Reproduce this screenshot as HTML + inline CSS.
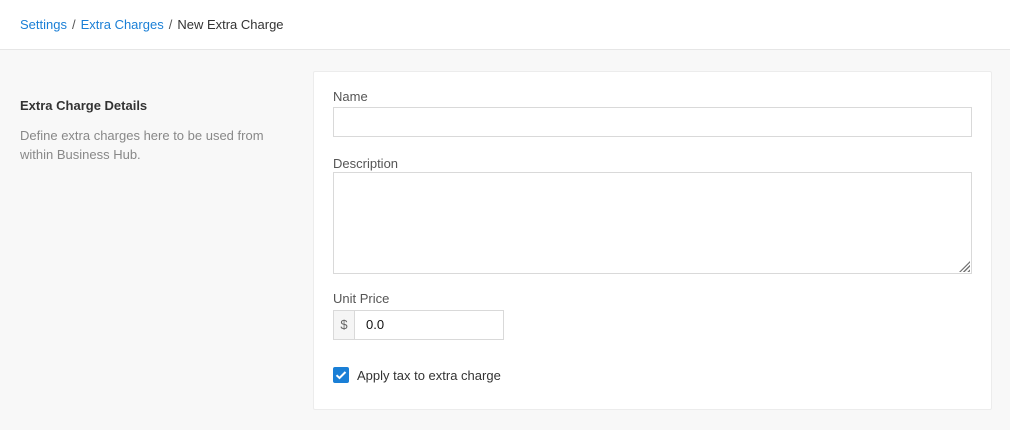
<!DOCTYPE html>
<html><head><meta charset="utf-8"><style>
*{box-sizing:border-box;margin:0;padding:0}
body{width:1010px;height:430px;background:#f8f8f8;font-family:"Liberation Sans",sans-serif;position:relative;overflow:hidden}
.hdr{position:absolute;left:0;top:0;width:1010px;height:50px;background:#fff;border-bottom:1px solid #e6e6e6}
.bc{position:absolute;left:20px;top:17px;font-size:13px;color:#333}
.bc a{color:#1a7fd6;text-decoration:none}
.bc .s{color:#555;margin:0 5px}
.side h3{position:absolute;left:20px;top:98px;font-size:13px;font-weight:bold;color:#333}
.side p{position:absolute;left:20px;top:126px;font-size:13px;line-height:19px;color:#888;width:270px}
.card{position:absolute;left:313px;top:71px;width:679px;height:339px;background:#fff;border:1px solid #ececec;border-radius:2px}
.lbl{position:absolute;left:19px;font-size:13px;color:#555}
.inp{position:absolute;left:19px;border:1px solid #d9d9d9;background:#fff}
.grip{position:absolute;right:1px;bottom:1px;width:11px;height:11px;background:repeating-linear-gradient(135deg,transparent 0 1.5px,#777 1.5px 3px);clip-path:polygon(100% 0,100% 100%,0 100%)}
</style></head><body>
<div class="hdr"><div class="bc"><a>Settings</a><span class="s">/</span><a>Extra Charges</a><span class="s">/</span>New Extra Charge</div></div>
<div class="side"><h3>Extra Charge Details</h3><p>Define extra charges here to be used from within Business Hub.</p></div>
<div class="card">
<div class="lbl" style="top:17px">Name</div>
<div class="inp" style="top:35px;width:639px;height:30px"></div>
<div class="lbl" style="top:84px">Description</div>
<div class="inp" style="top:100px;width:639px;height:102px"><div class="grip"></div></div>
<div class="lbl" style="top:219px">Unit Price</div>
<div class="inp" style="top:238px;width:171px;height:30px;">
<div style="position:absolute;left:0;top:0;width:21px;height:28px;background:#f5f5f5;border-right:1px solid #d9d9d9;color:#666;font-size:13px;text-align:center;line-height:28px">$</div>
<div style="position:absolute;left:32px;top:0;line-height:28px;font-size:13px;color:#111">0.0</div></div>
<div style="position:absolute;left:19px;top:295px;width:16px;height:16px;background:#1a7fd6;border-radius:2px">
<svg width="16" height="16" viewBox="0 0 16 16"><path d="M3.5 8.2l3 2.8 6-6" stroke="#fff" stroke-width="2" fill="none"/></svg></div>
<div style="position:absolute;left:43px;top:296px;font-size:13px;color:#333">Apply tax to extra charge</div>
</div>
</body></html>
